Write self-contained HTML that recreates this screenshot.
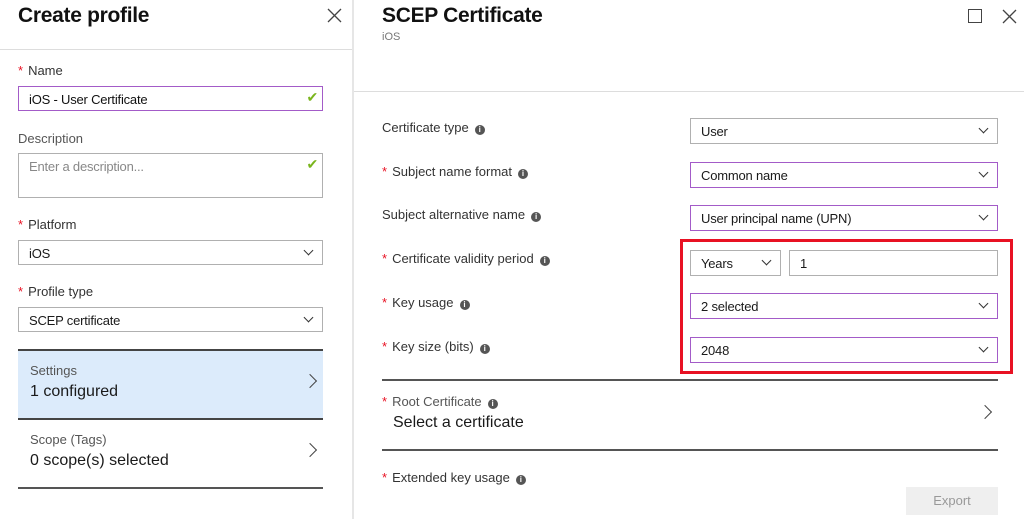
<!DOCTYPE html><html><head><style>
*{box-sizing:border-box;margin:0;padding:0}
body{width:1024px;height:519px;position:relative;background:#fff;font-family:"Segoe UI","Liberation Sans",sans-serif;color:#1a1a1a;overflow:hidden;font-size:13px}
.a{position:absolute}
.lbl{font-size:13px;color:#333}
.req{color:#e81123;margin-right:5px}
.box{position:absolute;border:1px solid #b0b0b0;background:#fff;font-size:13px;padding:5px 10px 0;height:25px;letter-spacing:-0.2px}
.pur{border-color:#a35bc8}
.chev{position:absolute;right:10px;top:6px;width:7px;height:7px;border-right:1.5px solid #333;border-bottom:1.5px solid #333;transform:rotate(45deg)}
.info{display:inline-block;width:10px;height:10px;border-radius:50%;background:#555;color:#fff;font-size:8px;line-height:10px;text-align:center;font-weight:bold;margin-left:6px;vertical-align:0px}
.rch{position:absolute;width:10px;height:10px;border-right:1.3px solid #444;border-top:1.3px solid #444;transform:rotate(45deg)}
.chk{position:absolute;color:#7ab51d;font-size:14px}
</style></head><body>
<div class="a" style="left:352px;top:0;width:2px;height:519px;background:#e6e6e6"></div>
<div class="a" style="left:0;top:49px;width:352px;height:1px;background:#ddd"></div>
<div class="a" style="left:354px;top:91px;width:670px;height:1px;background:#ddd"></div>
<div class="a" style="left:18px;top:4px;font-size:21px;font-weight:600;color:#111;letter-spacing:-0.3px">Create profile</div>
<svg class="a" style="left:327px;top:8px" width="15" height="15"><path d="M1 1L14 14M14 1L1 14" stroke="#444" stroke-width="1.3"/></svg>
<div class="a" style="left:382px;top:4px;font-size:21px;font-weight:600;color:#111;letter-spacing:-0.3px">SCEP Certificate</div>
<div class="a" style="left:382px;top:31px;font-size:11px;color:#777">iOS</div>
<div class="a" style="left:968px;top:9px;width:14px;height:14px;border:1.3px solid #444"></div>
<svg class="a" style="left:1002px;top:9px" width="15" height="15"><path d="M1 1L14 14M14 1L1 14" stroke="#444" stroke-width="1.3"/></svg>

<div class="a lbl" style="left:18px;top:63px"><span class="req">*</span>Name</div>
<div class="box pur" style="left:18px;top:86px;width:305px;height:25px;color:#111">iOS - User Certificate<span class="chk" style="right:4px;top:2px">✔</span></div>
<div class="a lbl" style="left:18px;top:131px;color:#555">Description</div>
<div class="box" style="left:18px;top:153px;width:305px;height:45px;color:#888">Enter a description...<span class="chk" style="right:4px;top:2px">✔</span></div>
<div class="a lbl" style="left:18px;top:217px"><span class="req">*</span>Platform</div>
<div class="box" style="left:18px;top:240px;width:305px">iOS<span class="chev"></span></div>
<div class="a lbl" style="left:18px;top:284px"><span class="req">*</span>Profile type</div>
<div class="box" style="left:18px;top:307px;width:305px">SCEP certificate<span class="chev"></span></div>
<div class="a" style="left:18px;top:349px;width:305px;height:71px;background:#dcebfb;border-top:2px solid #444;border-bottom:2px solid #444"></div>
<div class="a" style="left:30px;top:363px;color:#555">Settings</div>
<div class="a" style="left:30px;top:383px;font-size:16px">1 configured</div>
<div class="rch" style="left:305px;top:376px"></div>
<div class="a" style="left:30px;top:432px;color:#555">Scope (Tags)</div>
<div class="a" style="left:30px;top:452px;font-size:16px">0 scope(s) selected</div>
<div class="rch" style="left:305px;top:445px"></div>
<div class="a" style="left:18px;top:487px;width:305px;height:2px;background:#555"></div>

<div class="a lbl" style="left:382px;top:120px">Certificate type<span class="info">i</span></div>
<div class="a lbl" style="left:382px;top:164px"><span class="req">*</span>Subject name format<span class="info">i</span></div>
<div class="a lbl" style="left:382px;top:207px">Subject alternative name<span class="info">i</span></div>
<div class="a lbl" style="left:382px;top:251px"><span class="req">*</span>Certificate validity period<span class="info">i</span></div>
<div class="a lbl" style="left:382px;top:295px"><span class="req">*</span>Key usage<span class="info">i</span></div>
<div class="a lbl" style="left:382px;top:339px"><span class="req">*</span>Key size (bits)<span class="info">i</span></div>
<div class="box" style="left:690px;top:118px;width:308px;height:26px">User<span class="chev"></span></div>
<div class="box pur" style="left:690px;top:162px;width:308px;height:26px">Common name<span class="chev"></span></div>
<div class="box pur" style="left:690px;top:205px;width:308px;height:26px">User principal name (UPN)<span class="chev"></span></div>
<div class="box" style="left:690px;top:250px;width:91px;height:26px">Years<span class="chev"></span></div>
<div class="box" style="left:789px;top:250px;width:209px;height:26px">1</div>
<div class="box pur" style="left:690px;top:293px;width:308px;height:26px">2 selected<span class="chev"></span></div>
<div class="box pur" style="left:690px;top:337px;width:308px;height:26px">2048<span class="chev"></span></div>
<div class="a" style="left:680px;top:239px;width:333px;height:135px;border:3px solid #e81123"></div>
<div class="a" style="left:382px;top:379px;width:616px;height:2px;background:#555"></div>
<div class="a lbl" style="left:382px;top:394px;color:#555"><span class="req">*</span>Root Certificate<span class="info">i</span></div>
<div class="a" style="left:393px;top:414px;font-size:16px">Select a certificate</div>
<div class="rch" style="left:980px;top:407px"></div>
<div class="a" style="left:382px;top:449px;width:616px;height:2px;background:#555"></div>
<div class="a lbl" style="left:382px;top:470px"><span class="req">*</span>Extended key usage<span class="info">i</span></div>
<div class="a" style="left:906px;top:487px;width:92px;height:28px;background:#efefef;color:#999;text-align:center;line-height:28px">Export</div>
</body></html>
